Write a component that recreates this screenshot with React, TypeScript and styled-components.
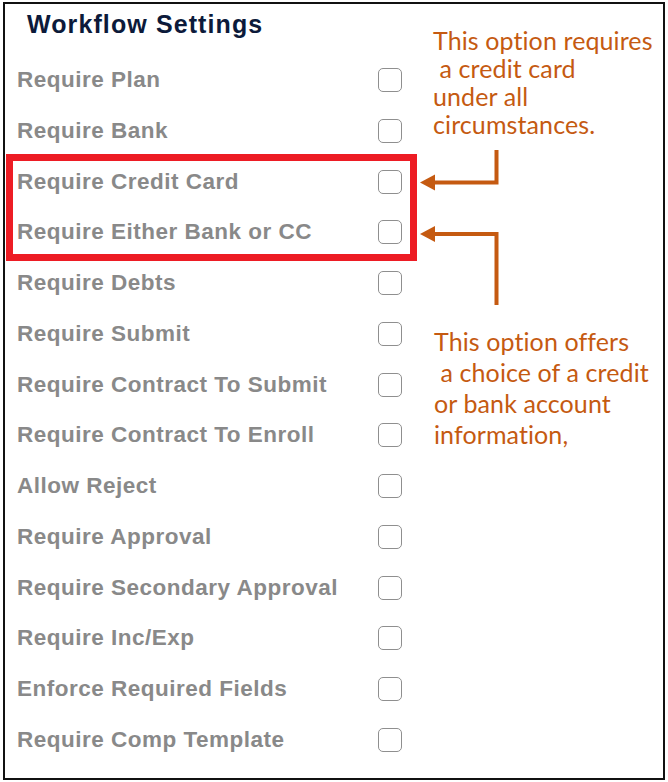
import React from 'react'
import styled, { createGlobalStyle } from 'styled-components'

const GlobalStyle = createGlobalStyle`
  html, body {
    margin: 0;
    padding: 0;
    background: #ffffff;
  }
`

const settings = [
  'Require Plan',
  'Require Bank',
  'Require Credit Card',
  'Require Either Bank or CC',
  'Require Debts',
  'Require Submit',
  'Require Contract To Submit',
  'Require Contract To Enroll',
  'Allow Reject',
  'Require Approval',
  'Require Secondary Approval',
  'Require Inc/Exp',
  'Enforce Required Fields',
  'Require Comp Template',
]

const App = () => {
  return (
    <Page>
      <GlobalStyle />
      <Frame>
        <Title>Workflow Settings</Title>
        <List>
          {settings.map((label) => (
            <Row key={label}>
              <Label>{label}</Label>
              <Box type="checkbox" aria-label={label} />
            </Row>
          ))}
        </List>
      </Frame>

      {/* annotations drawn over the screenshot */}
      <Highlight />
      <Arrows width="668" height="782" viewBox="0 0 668 782">
        <polyline points="496.5,150 496.5,182.5 432,182.5" fill="none" stroke="#c55a11" strokeWidth="4" />
        <polygon points="420,182.5 435,174.5 435,190.5" fill="#c55a11" />
        <polyline points="496.5,305 496.5,234 432,234" fill="none" stroke="#c55a11" strokeWidth="4" />
        <polygon points="420,234 435,226 435,242" fill="#c55a11" />
      </Arrows>
      <Note $top={26} $left={433} $lineHeight={28}>
        <span>This option requires</span>
        <span> a credit card</span>
        <span>under all</span>
        <span>circumstances.</span>
      </Note>
      <Note $top={326} $left={434} $lineHeight={31}>
        <span>This option offers</span>
        <span> a choice of a credit</span>
        <span>or bank account</span>
        <span>information,</span>
      </Note>
    </Page>
  )
}

export default App

const Page = styled.div`
  position: relative;
  width: 668px;
  height: 782px;
  overflow: hidden;
`

const Frame = styled.div`
  margin: 2px 0 0 3px;
  width: 662px;
  height: 778px;
  box-sizing: border-box;
  border: 2px solid #111111;
  padding-left: 12px;
`

const Title = styled.div`
  height: 50.6px;
  box-sizing: border-box;
  padding-top: 5px;
  padding-left: 10px;
  font-family: "Liberation Sans", Arial, sans-serif;
  font-weight: 700;
  font-size: 25px;
  line-height: 30px;
  letter-spacing: 1.1px;
  color: #0c1a3a;
`

const List = styled.div`
  display: flex;
  flex-direction: column;
`

const Row = styled.div`
  width: 385px;
  height: 50.77px;
  display: flex;
  align-items: center;
  justify-content: space-between;
`

const Label = styled.span`
  font-family: "Liberation Sans", Arial, sans-serif;
  font-weight: 700;
  font-size: 22.5px;
  line-height: 26px;
  letter-spacing: 0.5px;
  color: #898989;
`

const Box = styled.input`
  appearance: none;
  margin: 0;
  width: 24px;
  height: 24px;
  box-sizing: border-box;
  border: 1.5px solid #8f8f8f;
  border-radius: 5px;
  background: #ffffff;
`

const Highlight = styled.div`
  position: absolute;
  left: 6px;
  top: 154px;
  width: 411px;
  height: 107px;
  box-sizing: border-box;
  border: 7px solid #ed1c24;
  pointer-events: none;
`

const Arrows = styled.svg`
  position: absolute;
  left: 0;
  top: 0;
  pointer-events: none;
`

const Note = styled.div<{ $top: number; $left: number; $lineHeight: number }>`
  position: absolute;
  top: ${(p) => p.$top}px;
  left: ${(p) => p.$left}px;
  display: flex;
  flex-direction: column;
  font-family: Lato, "Open Sans", sans-serif;
  font-size: 25px;
  line-height: ${(p) => p.$lineHeight}px;
  letter-spacing: 0.1px;
  color: #c55a11;
  white-space: pre;
`
